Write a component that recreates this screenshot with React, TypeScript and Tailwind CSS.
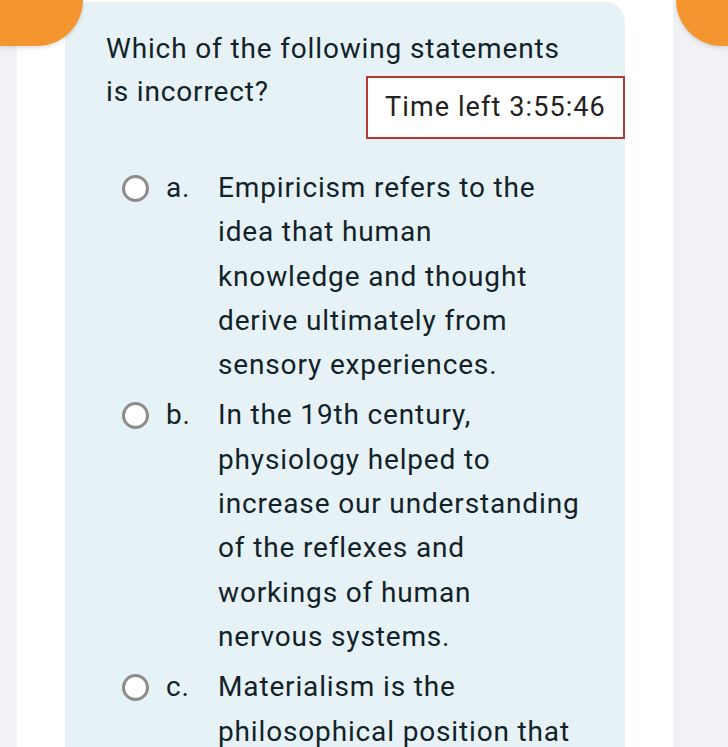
const OPTIONS = [
  {
    letter: "a.",
    lines: [
      "Empiricism refers to the",
      "idea that human",
      "knowledge and thought",
      "derive ultimately from",
      "sensory experiences.",
    ],
  },
  {
    letter: "b.",
    lines: [
      "In the 19th century,",
      "physiology helped to",
      "increase our understanding",
      "of the reflexes and",
      "workings of human",
      "nervous systems.",
    ],
  },
  {
    letter: "c.",
    lines: ["Materialism is the", "philosophical position that"],
  },
];

export default function App() {
  return (
    <div
      className="relative h-[747px] w-[728px] overflow-hidden bg-[#f0f2f6] text-[#12222a]"
      style={{ fontFamily: "Roboto, 'Noto Sans', sans-serif" }}
    >
      {/* orange corner bubbles */}
      <div className="absolute left-0 top-0 z-10 h-[46px] w-[83px] rounded-br-[48px] bg-[#f5952f] shadow-[0_2px_4px_rgba(0,0,0,0.12)]" />
      <div className="absolute right-0 top-0 z-10 h-[46px] w-[52px] rounded-bl-[48px] bg-[#f5952f] shadow-[0_2px_4px_rgba(0,0,0,0.12)]" />

      <div className="ml-[17px] h-full w-[656px] bg-white px-[48px] pt-[2px]">
        <div className="h-full rounded-tr-[20px] bg-[#e6f2f5] pl-[41px] pt-[25px]">
          {/* question */}
          <div className="text-[28px] leading-[43px] tracking-[0.85px]">
            <p>Which of the following statements</p>
            <div className="flex items-start justify-between">
              <p>is incorrect?</p>
              <div className="mt-[6px] flex h-[63px] w-[259px] items-center justify-center border-2 border-[#b23a2e] bg-white text-[27px] tracking-[1.1px] text-[#222]">
                Time left 3:55:46
              </div>
            </div>
          </div>

          {/* options */}
          <div className="mt-[27px] flex flex-col gap-[6px] pl-[16px]">
            {OPTIONS.map((opt) => (
              <div key={opt.letter} className="flex items-start text-[28px] leading-[44.3px] tracking-[0.85px]">
                <div className="flex h-[44px] w-[44px] shrink-0 items-center">
                  <span className="block h-[27px] w-[27px] rounded-full border-[3px] border-[#8e8e8e] bg-white" />
                </div>
                <span className="w-[52px] shrink-0">{opt.letter}</span>
                <p>
                  {opt.lines.map((line, i) => (
                    <span key={i} className="block whitespace-nowrap">
                      {line}
                    </span>
                  ))}
                </p>
              </div>
            ))}
          </div>
        </div>
      </div>
    </div>
  );
}
